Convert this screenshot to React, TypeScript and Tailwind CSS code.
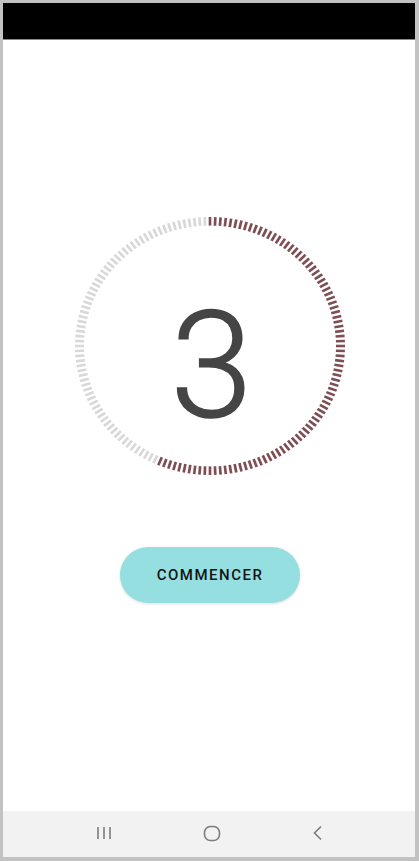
const TICKS = 160;
const PROGRESS_DEG = 203;

function Ring() {
  const cx = 135;
  const cy = 135;
  const rOut = 135;
  const rIn = 126;
  const ticks = Array.from({ length: TICKS }, (_, i) => {
    const deg = (i * 360) / TICKS;
    const a = (deg * Math.PI) / 180;
    const s = Math.sin(a);
    const c = Math.cos(a);
    return (
      <line
        key={i}
        x1={cx + rIn * s}
        y1={cy - rIn * c}
        x2={cx + rOut * s}
        y2={cy - rOut * c}
        stroke={deg < PROGRESS_DEG ? "#7d4e53" : "#d8d8d8"}
        strokeWidth={2.7}
      />
    );
  });
  return (
    <svg
      className="absolute inset-0 h-full w-full"
      viewBox="0 0 270 270"
      preserveAspectRatio="none"
    >
      {ticks}
    </svg>
  );
}

function NavBar() {
  return (
    <div className="flex h-[46px] items-center justify-between bg-[#f2f2f2] pl-[92px] pr-[90px] pb-[2px]">
      <svg width="18" height="14" viewBox="0 0 18 14" fill="none" stroke="#7c7c7c" strokeWidth="1.6">
        <line x1="3" y1="1" x2="3" y2="13" />
        <line x1="9" y1="1" x2="9" y2="13" />
        <line x1="15" y1="1" x2="15" y2="13" />
      </svg>
      <svg width="18" height="17" viewBox="0 0 18 17" fill="none" stroke="#7c7c7c" strokeWidth="1.6">
        <rect x="1.5" y="1.5" width="15" height="14" rx="6" />
      </svg>
      <svg width="14" height="16" viewBox="0 0 14 16" fill="none" stroke="#7c7c7c" strokeWidth="1.6">
        <polyline points="10,1.5 3.5,8 10,14.5" />
      </svg>
    </div>
  );
}

export default function App() {
  return (
    <div className="flex h-[861px] w-[419px] flex-col border-t-[3px] border-l-[3px] border-r-4 border-b-4 border-[#c2c2c2] bg-white font-['Roboto',sans-serif]">
      {/* status bar */}
      <div className="h-[37px] border-b border-[#8a8a8a] bg-black" />

      <div className="flex flex-1 flex-col items-center pt-[177px] pl-[2px]">
        <div className="relative h-[258px] w-[270px]">
          <Ring />
          <div className="absolute inset-0 flex items-center justify-center pt-[42px] pl-[3px]">
            <span className="text-[148px] font-light leading-none text-[#454545] [-webkit-text-stroke:1.6px_#454545]">3</span>
          </div>
        </div>

        <button className="mt-[72px] h-[56px] w-[180px] rounded-full bg-[#95dfe1] text-[15px] font-medium tracking-[0.1em] text-[#141414] shadow-[0_1px_3px_rgba(0,0,0,0.14)]">
          COMMENCER
        </button>
      </div>

      <NavBar />
    </div>
  );
}
